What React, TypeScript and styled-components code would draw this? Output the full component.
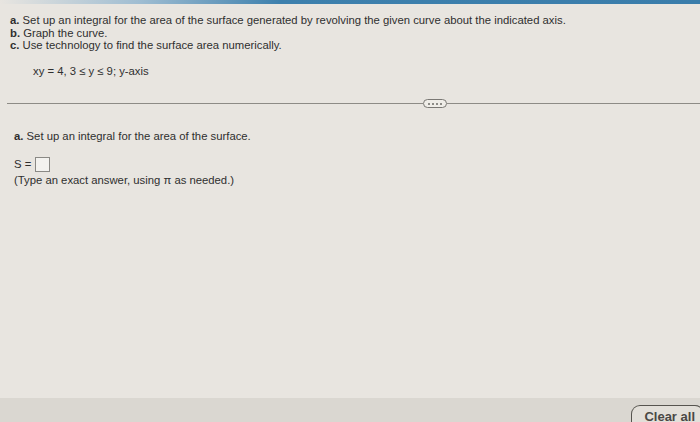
import React from "react";
import styled, { createGlobalStyle } from "styled-components";

const GlobalStyle = createGlobalStyle`
  html, body {
    margin: 0;
    padding: 0;
    background: #e6e3de;
  }
  #root {
    width: 700px;
    height: 422px;
    overflow: hidden;
  }
`;

const Page = styled.div`
  width: 700px;
  height: 422px;
  display: flex;
  flex-direction: column;
  background: #e8e5e0;
  font-family: "Liberation Sans", Arial, sans-serif;
  color: #2f2f2f;
  overflow: hidden;
`;

const TopBar = styled.div`
  height: 4px;
  flex-shrink: 0;
  background: linear-gradient(90deg, #e8e5e0 0%, #9fbdd2 20%, #3d80ad 40%, #3a7dab 100%);
`;

const Main = styled.div`
  flex: 1;
  display: flex;
  flex-direction: column;
`;

const Question = styled.div`
  padding: 10px 0 0 10px;
  font-size: 11.3px;
  line-height: 12.5px;
`;

const Line = styled.div<{ $indent?: number; $top?: number }>`
  padding-left: ${({ $indent }) => $indent ?? 0}px;
  margin-top: ${({ $top }) => $top ?? 0}px;
  white-space: nowrap;
`;

const Bold = styled.b`
  font-weight: 700;
`;

const DividerRow = styled.div`
  margin-top: 21px;
  margin-left: 7px;
  display: flex;
  align-items: center;
  height: 10px;
`;

const Rule = styled.div<{ $w?: number }>`
  height: 1px;
  background: #8d8b86;
  flex: ${({ $w }) => ($w ? `0 0 ${$w}px` : "1")};
`;

const MoreButton = styled.div`
  width: 22px;
  height: 7px;
  border: 1px solid #7a7874;
  border-radius: 5px;
  background: #efede8;
  display: flex;
  align-items: center;
  justify-content: center;
  gap: 2px;
`;

const Dot = styled.span`
  width: 2px;
  height: 2px;
  border-radius: 1px;
  background: #6d6b67;
`;

const Answer = styled.div`
  padding: 20px 0 0 14px;
  font-size: 11.3px;
  line-height: 14px;
  flex: 1;
`;

const Formula = styled.div`
  margin-top: 14px;
  display: flex;
  align-items: center;
  gap: 4px;
  white-space: nowrap;
`;

const InputBox = styled.span`
  display: inline-block;
  width: 13px;
  height: 13px;
  border: 1px solid #8a8985;
  background: #f3f2ef;
`;

const Hint = styled.div`
  margin-top: 1px;
  white-space: nowrap;
`;

const Footer = styled.div`
  height: 24px;
  flex-shrink: 0;
  background: #dad7d1;
  display: flex;
  justify-content: flex-end;
  align-items: flex-start;
  padding-top: 7px;
  box-sizing: border-box;
`;

const ClearButton = styled.div`
  margin-right: -4px;
  padding: 4px 8px 6px 12px;
  border: 1px solid #56544f;
  border-bottom: none;
  border-radius: 9px 9px 0 0;
  font-size: 13px;
  line-height: 14px;
  font-weight: 700;
  color: #4a4845;
  background: #e2dfd9;
  white-space: nowrap;
`;

export default function App() {
  return (
    <>
      <GlobalStyle />
      <Page>
        <TopBar />
        <Main>
          <Question>
            <Line>
              <Bold>a.</Bold> Set up an integral for the area of the surface generated by revolving the given curve about
              the indicated axis.
            </Line>
            <Line>
              <Bold>b.</Bold> Graph the curve.
            </Line>
            <Line>
              <Bold>c.</Bold> Use technology to find the surface area numerically.
            </Line>
            <Line $indent={23} $top={13.5}>
              xy = 4, 3 ≤ y ≤ 9; y-axis
            </Line>
          </Question>
          <DividerRow>
            <Rule $w={416} />
            <MoreButton>
              <Dot />
              <Dot />
              <Dot />
              <Dot />
            </MoreButton>
            <Rule />
          </DividerRow>
          <Answer>
            <Line>
              <Bold>a.</Bold> Set up an integral for the area of the surface.
            </Line>
            <Formula>
              <span>S =</span>
              <InputBox />
            </Formula>
            <Hint>(Type an exact answer, using π as needed.)</Hint>
          </Answer>
        </Main>
        <Footer>
          <ClearButton>Clear all</ClearButton>
        </Footer>
      </Page>
    </>
  );
}
